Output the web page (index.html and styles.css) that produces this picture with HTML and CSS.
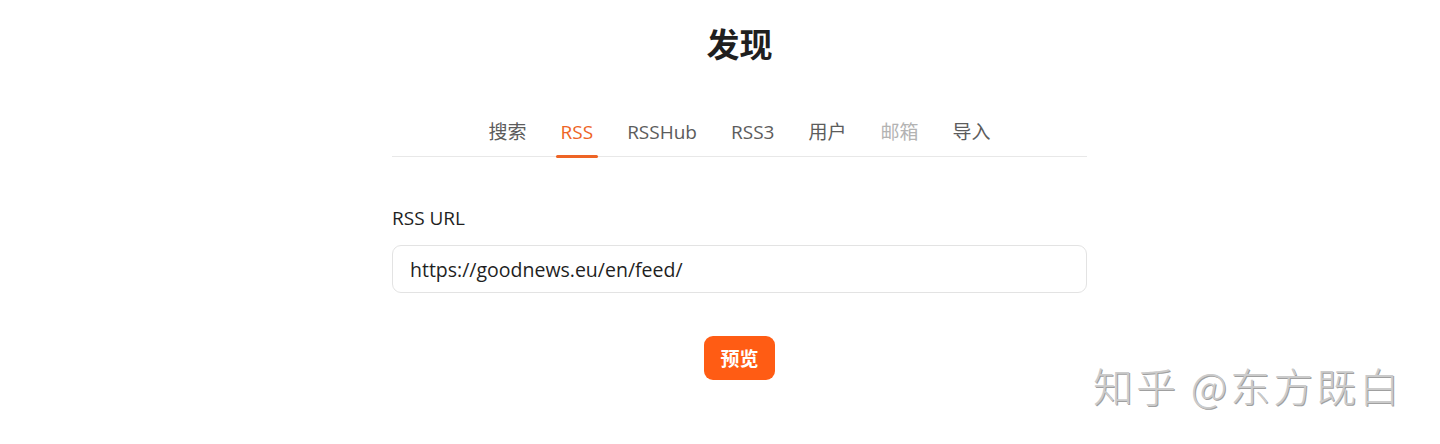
FILE: index.html
```html
<!DOCTYPE html>
<html lang="zh-CN">
<head>
  <meta charset="UTF-8" />
  <meta name="viewport" content="width=device-width, initial-scale=1.0" />
  <title>发现</title>
  <link rel="stylesheet" href="styles.css">
</head>
<body>
  <main class="page">
    <h1 class="title">发现</h1>

    <nav class="tabs">
      <span class="tab">搜索</span>
      <span class="tab active">RSS</span>
      <span class="tab">RSSHub</span>
      <span class="tab">RSS3</span>
      <span class="tab">用户</span>
      <span class="tab disabled">邮箱</span>
      <span class="tab">导入</span>
    </nav>

    <form class="form">
      <label class="label" for="rssUrl">RSS URL</label>
      <input class="input" id="rssUrl" type="text" value="https://goodnews.eu/en/feed/" />
      <div class="actions">
        <button type="button" class="btn">预览</button>
      </div>
    </form>
  </main>

  <!-- 水印 -->
  <div class="watermark">知乎 @东方既白</div>
</body>
</html>
```

FILE: styles.css
```css
body {
  margin: 0;
  padding-left: 39px;
  background-color: #fff;
  font-family: "Open Sans", "Noto Sans CJK SC", sans-serif;
  color: #222;
}

.page {
  width: 695px;
  margin: 0 auto;
  padding-top: 22px;
}

.title {
  margin: 0;
  text-align: center;
  font-size: 33px;
  line-height: 46px;
  font-weight: 700;
  color: #1f1f1f;
}

.tabs {
  display: flex;
  justify-content: center;
  margin-top: 50px;
  border-bottom: 1px solid #e8e8e8;
}

.tab {
  position: relative;
  padding: 0 17px 10px;
  font-size: 19px;
  line-height: 28px;
  color: #5c5c5c;
}

.tab.active {
  color: #ee6425;
}

.tab.active::after {
  content: "";
  position: absolute;
  left: 12px;
  right: 12px;
  bottom: -2px;
  height: 3px;
  border-radius: 2px;
  background-color: #ee6425;
}

.tab.disabled {
  color: #b3b3b3;
}

.form {
  margin-top: 48px;
}

.label {
  display: block;
  font-size: 19px;
  line-height: 26px;
  color: #1f1f1f;
}

.input {
  display: block;
  width: 100%;
  box-sizing: border-box;
  margin-top: 14px;
  height: 48px;
  padding: 0 17px;
  font-family: inherit;
  font-size: 19.5px;
  color: #1f1f1f;
  border: 1px solid #e3e3e3;
  border-radius: 9px;
  outline: none;
}

.actions {
  display: flex;
  justify-content: center;
  margin-top: 43px;
}

.btn {
  height: 44px;
  padding: 0 16px;
  font-family: inherit;
  font-size: 19px;
  font-weight: 700;
  color: #fff;
  background-color: #ff5c14;
  border: none;
  border-radius: 9px;
}

.watermark {
  position: absolute;
  left: 1093px;
  top: 360px;
  font-family: "Noto Sans CJK SC", sans-serif;
  font-size: 40px;
  font-weight: 300;
  line-height: 50px;
  letter-spacing: 3px;
  color: #cbcbcb;
  text-shadow: 1px 1px 0 #a0a0a0;
}
```
